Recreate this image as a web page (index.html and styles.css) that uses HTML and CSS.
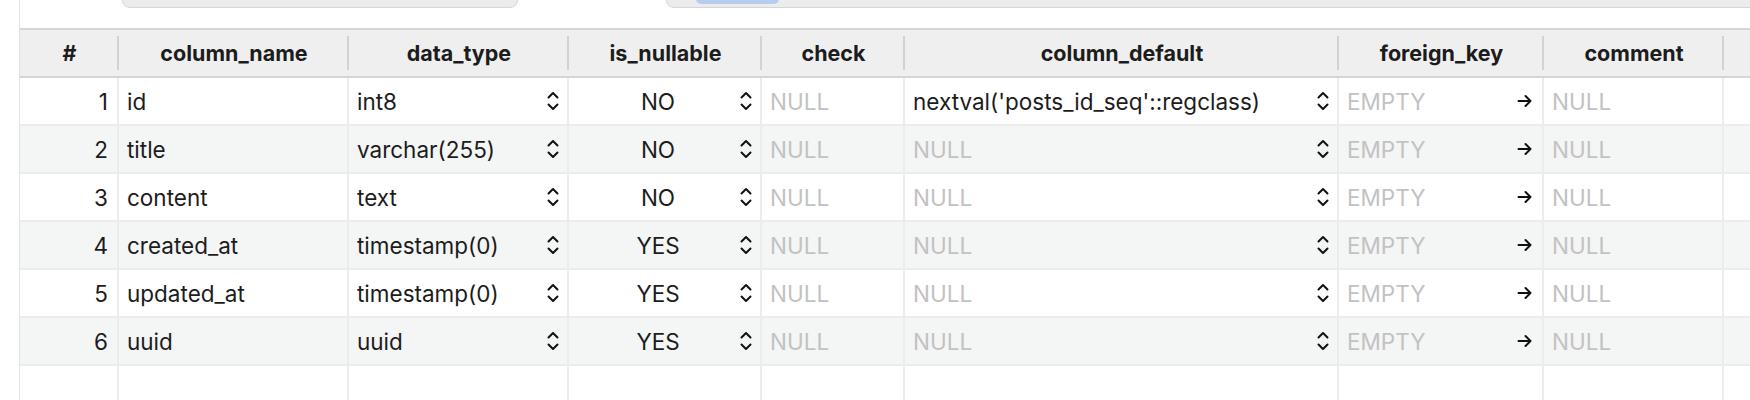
FILE: index.html
```html
<!DOCTYPE html>
<html>
<head>
<meta charset="utf-8">
<link rel="stylesheet" href="styles.css">
</head>
<body>
<div class="app">
  <div class="toolbar">
    <div class="field field-search"></div>
    <div class="mark"><svg width="8" height="4" viewBox="0 0 8 4"><path d="M1 0 L4 3 L7 0" fill="none" stroke="#9a9a9a" stroke-width="1.4"/></svg></div>
    <div class="field field-filter"><div class="pill"></div></div>
  </div>
  <div class="main">
    <div class="sidebar"></div>
    <div class="grid">
      <div class="row head">
        <div class="cell"><span>#</span></div>
        <div class="cell"><span>column_name</span></div>
        <div class="cell"><span>data_type</span></div>
        <div class="cell"><span>is_nullable</span></div>
        <div class="cell"><span>check</span></div>
        <div class="cell"><span>column_default</span></div>
        <div class="cell"><span>foreign_key</span></div>
        <div class="cell"><span>comment</span></div>
        <div class="cell last"></div>
      </div>

      <div class="row">
        <div class="cell num">1</div>
        <div class="cell">id</div>
        <div class="cell sel"><span class="txt">int8</span><svg class="chev" viewBox="0 0 14 22"><path d="M2.5 7.5 L7 3 L11.5 7.5 M2.5 14.5 L7 19 L11.5 14.5"/></svg></div>
        <div class="cell sel center"><span class="txt">NO</span><svg class="chev" viewBox="0 0 14 22"><path d="M2.5 7.5 L7 3 L11.5 7.5 M2.5 14.5 L7 19 L11.5 14.5"/></svg></div>
        <div class="cell null">NULL</div>
        <div class="cell sel"><span class="txt">nextval('posts_id_seq'::regclass)</span><svg class="chev" viewBox="0 0 14 22"><path d="M2.5 7.5 L7 3 L11.5 7.5 M2.5 14.5 L7 19 L11.5 14.5"/></svg></div>
        <div class="cell sel"><span class="txt null">EMPTY</span><svg class="arrow" viewBox="0 0 16 14"><path d="M1.5 7 H13.5 M8.5 2 L13.5 7 L8.5 12"/></svg></div>
        <div class="cell null">NULL</div>
        <div class="cell last"></div>
      </div>

      <div class="row alt">
        <div class="cell num">2</div>
        <div class="cell">title</div>
        <div class="cell sel"><span class="txt">varchar(255)</span><svg class="chev" viewBox="0 0 14 22"><path d="M2.5 7.5 L7 3 L11.5 7.5 M2.5 14.5 L7 19 L11.5 14.5"/></svg></div>
        <div class="cell sel center"><span class="txt">NO</span><svg class="chev" viewBox="0 0 14 22"><path d="M2.5 7.5 L7 3 L11.5 7.5 M2.5 14.5 L7 19 L11.5 14.5"/></svg></div>
        <div class="cell null">NULL</div>
        <div class="cell sel"><span class="txt null">NULL</span><svg class="chev" viewBox="0 0 14 22"><path d="M2.5 7.5 L7 3 L11.5 7.5 M2.5 14.5 L7 19 L11.5 14.5"/></svg></div>
        <div class="cell sel"><span class="txt null">EMPTY</span><svg class="arrow" viewBox="0 0 16 14"><path d="M1.5 7 H13.5 M8.5 2 L13.5 7 L8.5 12"/></svg></div>
        <div class="cell null">NULL</div>
        <div class="cell last"></div>
      </div>

      <div class="row">
        <div class="cell num">3</div>
        <div class="cell">content</div>
        <div class="cell sel"><span class="txt">text</span><svg class="chev" viewBox="0 0 14 22"><path d="M2.5 7.5 L7 3 L11.5 7.5 M2.5 14.5 L7 19 L11.5 14.5"/></svg></div>
        <div class="cell sel center"><span class="txt">NO</span><svg class="chev" viewBox="0 0 14 22"><path d="M2.5 7.5 L7 3 L11.5 7.5 M2.5 14.5 L7 19 L11.5 14.5"/></svg></div>
        <div class="cell null">NULL</div>
        <div class="cell sel"><span class="txt null">NULL</span><svg class="chev" viewBox="0 0 14 22"><path d="M2.5 7.5 L7 3 L11.5 7.5 M2.5 14.5 L7 19 L11.5 14.5"/></svg></div>
        <div class="cell sel"><span class="txt null">EMPTY</span><svg class="arrow" viewBox="0 0 16 14"><path d="M1.5 7 H13.5 M8.5 2 L13.5 7 L8.5 12"/></svg></div>
        <div class="cell null">NULL</div>
        <div class="cell last"></div>
      </div>

      <div class="row alt">
        <div class="cell num">4</div>
        <div class="cell">created_at</div>
        <div class="cell sel"><span class="txt">timestamp(0)</span><svg class="chev" viewBox="0 0 14 22"><path d="M2.5 7.5 L7 3 L11.5 7.5 M2.5 14.5 L7 19 L11.5 14.5"/></svg></div>
        <div class="cell sel center"><span class="txt">YES</span><svg class="chev" viewBox="0 0 14 22"><path d="M2.5 7.5 L7 3 L11.5 7.5 M2.5 14.5 L7 19 L11.5 14.5"/></svg></div>
        <div class="cell null">NULL</div>
        <div class="cell sel"><span class="txt null">NULL</span><svg class="chev" viewBox="0 0 14 22"><path d="M2.5 7.5 L7 3 L11.5 7.5 M2.5 14.5 L7 19 L11.5 14.5"/></svg></div>
        <div class="cell sel"><span class="txt null">EMPTY</span><svg class="arrow" viewBox="0 0 16 14"><path d="M1.5 7 H13.5 M8.5 2 L13.5 7 L8.5 12"/></svg></div>
        <div class="cell null">NULL</div>
        <div class="cell last"></div>
      </div>

      <div class="row">
        <div class="cell num">5</div>
        <div class="cell">updated_at</div>
        <div class="cell sel"><span class="txt">timestamp(0)</span><svg class="chev" viewBox="0 0 14 22"><path d="M2.5 7.5 L7 3 L11.5 7.5 M2.5 14.5 L7 19 L11.5 14.5"/></svg></div>
        <div class="cell sel center"><span class="txt">YES</span><svg class="chev" viewBox="0 0 14 22"><path d="M2.5 7.5 L7 3 L11.5 7.5 M2.5 14.5 L7 19 L11.5 14.5"/></svg></div>
        <div class="cell null">NULL</div>
        <div class="cell sel"><span class="txt null">NULL</span><svg class="chev" viewBox="0 0 14 22"><path d="M2.5 7.5 L7 3 L11.5 7.5 M2.5 14.5 L7 19 L11.5 14.5"/></svg></div>
        <div class="cell sel"><span class="txt null">EMPTY</span><svg class="arrow" viewBox="0 0 16 14"><path d="M1.5 7 H13.5 M8.5 2 L13.5 7 L8.5 12"/></svg></div>
        <div class="cell null">NULL</div>
        <div class="cell last"></div>
      </div>

      <div class="row alt">
        <div class="cell num">6</div>
        <div class="cell">uuid</div>
        <div class="cell sel"><span class="txt">uuid</span><svg class="chev" viewBox="0 0 14 22"><path d="M2.5 7.5 L7 3 L11.5 7.5 M2.5 14.5 L7 19 L11.5 14.5"/></svg></div>
        <div class="cell sel center"><span class="txt">YES</span><svg class="chev" viewBox="0 0 14 22"><path d="M2.5 7.5 L7 3 L11.5 7.5 M2.5 14.5 L7 19 L11.5 14.5"/></svg></div>
        <div class="cell null">NULL</div>
        <div class="cell sel"><span class="txt null">NULL</span><svg class="chev" viewBox="0 0 14 22"><path d="M2.5 7.5 L7 3 L11.5 7.5 M2.5 14.5 L7 19 L11.5 14.5"/></svg></div>
        <div class="cell sel"><span class="txt null">EMPTY</span><svg class="arrow" viewBox="0 0 16 14"><path d="M1.5 7 H13.5 M8.5 2 L13.5 7 L8.5 12"/></svg></div>
        <div class="cell null">NULL</div>
        <div class="cell last"></div>
      </div>

      <div class="row empty">
        <div class="cell"></div>
        <div class="cell"></div>
        <div class="cell"></div>
        <div class="cell"></div>
        <div class="cell"></div>
        <div class="cell"></div>
        <div class="cell"></div>
        <div class="cell"></div>
        <div class="cell last"></div>
      </div>
    </div>
  </div>
</div>
</body>
</html>
```
FILE: styles.css
```css
* { box-sizing: border-box; }
html, body {
  margin: 0;
  padding: 0;
  background: #ffffff;
  overflow: hidden;
}
body {
  font-family: "Inter", "Liberation Sans", sans-serif;
  color: #1c1c1c;
  width: 1750px;
  height: 400px;
}
.app {
  display: flex;
  flex-direction: column;
  height: 400px;
}
.toolbar {
  display: flex;
  align-items: flex-end;
  height: 30px;
  margin-top: -22px;
  padding-left: 122px;
  flex: none;
}
.field {
  height: 30px;
  background: #ececec;
  border: 1px solid #d6d6d6;
  border-radius: 8px;
}
.field-search { width: 396px; }
.mark {
  width: 148px;
  height: 30px;
  display: flex;
  align-items: flex-end;
  justify-content: flex-start;
  padding-left: 111px;
  padding-bottom: 25px;
}
.mark svg { display: block; }
.field-filter {
  flex: 1;
  margin-right: -20px;
  padding-left: 29px;
  display: flex;
  align-items: flex-end;
  padding-bottom: 3px;
}
.pill {
  width: 83px;
  height: 20px;
  background: #b5cdf1;
  border-radius: 5px;
}
.main {
  display: flex;
  flex: 1;
  margin-top: 20px;
  min-height: 0;
}
.sidebar {
  width: 20px;
  flex: none;
  border-right: 1px solid #e2e2e2;
  margin-top: -28px;
}
.grid {
  flex: 1;
  display: flex;
  flex-direction: column;
}
.row {
  display: grid;
  grid-template-columns: 99px 230px 220px 193px 143px 434px 205px 180px 1fr;
  height: 48px;
  border-bottom: 2px solid #ececec;
  flex: none;
}
.row.alt { background: #f4f5f5; }
.row.head {
  background: #efefef;
  border-top: 2px solid #d5d5d5;
  border-bottom: 2px solid #d5d5d5;
  height: 50px;
}
.row.empty { border-bottom: none; flex: 1; height: auto; }
.cell {
  display: flex;
  align-items: center;
  font-size: 22.5px;
  padding: 0 8px;
  border-right: 2px solid #ececec;
  white-space: nowrap;
  overflow: hidden;
  min-width: 0;
}
.cell.last { border-right: none; }
.head .cell {
  justify-content: center;
  font-weight: 700;
  font-size: 21.5px;
  border-right: none;
  position: relative;
}
.head .cell::after {
  content: "";
  position: absolute;
  right: 0;
  top: 6px;
  bottom: 6px;
  width: 2px;
  background: #d2d2d2;
}
.head .cell.last::after { display: none; }
.num { justify-content: flex-end; padding-right: 9px; }
.null { color: #c2c2c2; }
.sel { justify-content: space-between; padding-right: 7px; }
.sel .txt { flex: 1; overflow: hidden; }
.sel.center .txt { text-align: center; }
.chev {
  width: 14px;
  height: 22px;
  flex: none;
  fill: none;
  stroke: #111;
  stroke-width: 2;
  stroke-linecap: round;
  stroke-linejoin: round;
}
.arrow {
  width: 16px;
  height: 14px;
  flex: none;
  fill: none;
  stroke: #111;
  stroke-width: 2;
  stroke-linecap: round;
  stroke-linejoin: round;
  margin-right: 2px;
}
```
